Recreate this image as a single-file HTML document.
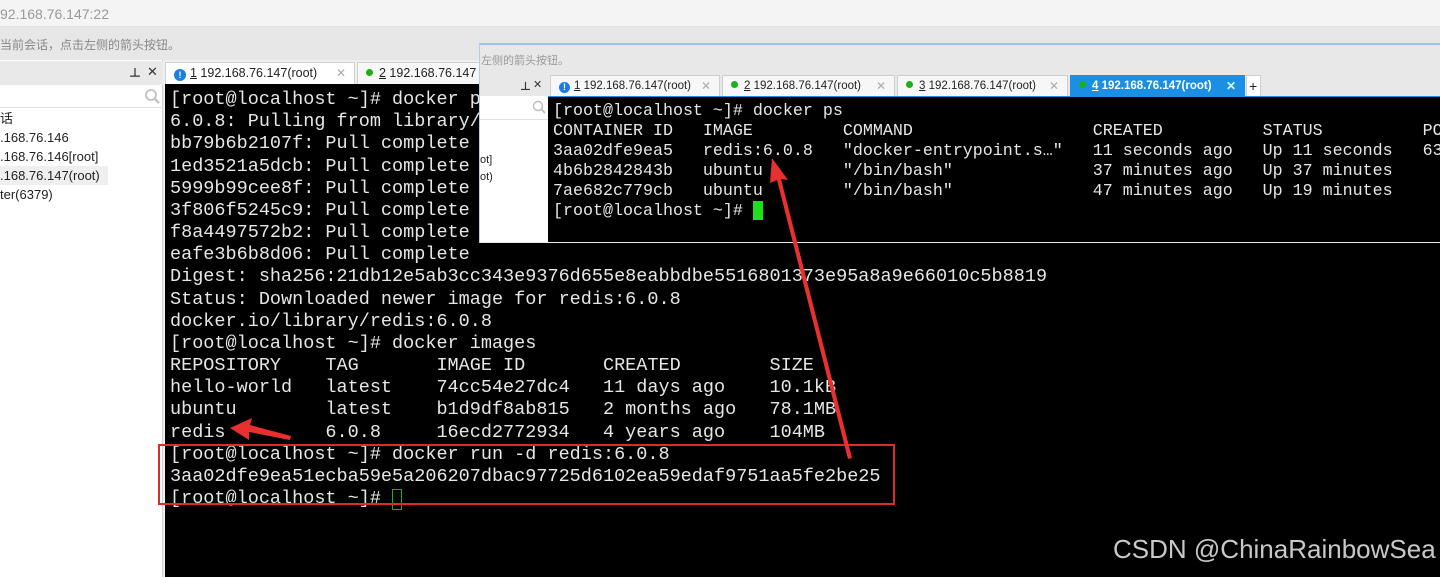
<!DOCTYPE html>
<html><head><meta charset="utf-8">
<style>
*{margin:0;padding:0;box-sizing:border-box}
body{width:1440px;height:577px;overflow:hidden;background:#f0f0f0;position:relative;font-family:"Liberation Sans","Noto Sans CJK SC",sans-serif}
.abs{position:absolute}
.mono{font-family:"Liberation Mono","DejaVu Sans Mono",monospace;white-space:pre;color:#e6e6e6}
.tab{position:absolute;height:22px;background:#f7f7f7;border:1px solid #cfcfcf;border-bottom:none;font-size:12.5px;color:#222;line-height:21px;padding-left:8px;white-space:nowrap;overflow:hidden}
.dot{display:inline-block;width:7px;height:7px;border-radius:50%;background:#1ab01a;margin-right:6px;vertical-align:1px}
.inf{display:inline-block;width:12px;height:12px;border-radius:50%;background:#1a7ee0;color:#fff;font-size:9px;line-height:12px;text-align:center;font-weight:bold;margin-right:4px;vertical-align:-1px}
.x{position:absolute;right:8px;top:0;color:#aaa;font-size:12px}
</style></head><body>
<div class="abs" style="left:0;top:0;width:1440px;height:27px;background:#f4f4f4;border-bottom:1px solid #e2e2e2"></div>
<div class="abs" style="left:0;top:6px;font-size:14px;color:#999">92.168.76.147:22</div>
<div class="abs" style="left:0;top:27px;width:1440px;height:33px;background:#e7e7e7"></div>
<div class="abs" style="left:0;top:36px;font-size:12px;color:#888">当前会话，点击左侧的箭头按钮。</div>

<div class="abs" style="left:0;top:60px;width:163px;height:517px;background:#fff;border-right:1px solid #ccc"></div>
<div class="abs" style="left:0;top:61px;width:163px;height:24px;background:#e9e9e9"></div>
<div class="abs" style="left:129px;top:64px;font-size:12px;font-weight:bold;color:#333">⊥</div>
<div class="abs" style="left:147px;top:64px;font-size:13px;color:#333">✕</div>
<div class="abs" style="left:0;top:107px;width:163px;height:1px;background:#e2e2e2"></div>
<svg class="abs" style="left:144px;top:88px" width="16" height="16"><circle cx="7" cy="7" r="5" fill="none" stroke="#bbb" stroke-width="1.6"/><line x1="11" y1="11" x2="15" y2="15" stroke="#bbb" stroke-width="2"/></svg>
<div class="abs" style="left:0;top:166px;width:108px;height:19px;background:#efefef"></div>
<div class="abs" style="left:0;top:109px;font-size:13px;line-height:19px;color:#222">话<br>.168.76.146<br>.168.76.146[root]<br>.168.76.147(root)<br>ter(6379)</div>

<div class="tab" style="left:165px;top:62px;width:190px;background:#fff"><span class="inf">!</span><u>1</u> 192.168.76.147(root)<span class="x">✕</span></div>
<div class="tab" style="left:357px;top:62px;width:130px"><span class="dot"></span><u>2</u> 192.168.76.147</div>
<div class="abs" style="left:165px;top:84px;width:1275px;height:493px;background:#000"></div>
<div class="abs mono" style="left:170px;top:89px;font-size:18.5px;line-height:22.17px">[root@localhost ~]# docker p
6.0.8: Pulling from library/
bb79b6b2107f: Pull complete
1ed3521a5dcb: Pull complete
5999b99cee8f: Pull complete
3f806f5245c9: Pull complete
f8a4497572b2: Pull complete
eafe3b6b8d06: Pull complete
Digest: sha256:21db12e5ab3cc343e9376d655e8eabbdbe5516801373e95a8a9e66010c5b8819
Status: Downloaded newer image for redis:6.0.8
docker.io/library/redis:6.0.8
[root@localhost ~]# docker images
REPOSITORY    TAG       IMAGE ID       CREATED        SIZE
hello-world   latest    74cc54e27dc4   11 days ago    10.1kB
ubuntu        latest    b1d9df8ab815   2 months ago   78.1MB
redis         6.0.8     16ecd2772934   4 years ago    104MB
[root@localhost ~]# docker run -d redis:6.0.8
3aa02dfe9ea51ecba59e5a206207dbac97725d6102ea59edaf9751aa5fe2be25
[root@localhost ~]# </div>
<div class="abs" style="left:392px;top:489px;width:10px;height:21px;border:1px solid #1db01d"></div>
<div class="abs" style="left:158px;top:444px;width:737px;height:61px;border:2px solid #e02a2a"></div>

<div class="abs" style="left:479px;top:43px;width:961px;height:200px;background:#e8e8e8;border-top:2px solid #9cc3ea;border-left:1px solid #bcd"></div>
<div class="abs" style="left:481px;top:52px;font-size:11px;color:#999">左侧的箭头按钮。</div>
<div class="abs" style="left:480px;top:75px;width:68px;height:167px;background:#fff"></div>
<div class="abs" style="left:480px;top:75px;width:68px;height:21px;background:#e8e8e8"></div>
<div class="abs" style="left:520px;top:78px;font-size:11px;font-weight:bold;color:#333">⊥</div>
<div class="abs" style="left:533px;top:78px;font-size:11px;color:#333">✕</div>
<svg class="abs" style="left:532px;top:100px" width="14" height="14"><circle cx="6" cy="6" r="4.5" fill="none" stroke="#bbb" stroke-width="1.4"/><line x1="9.5" y1="9.5" x2="13" y2="13" stroke="#bbb" stroke-width="1.8"/></svg>
<div class="abs" style="left:480px;top:119px;width:68px;height:1px;background:#e2e2e2"></div>
<div class="abs" style="left:480px;top:152px;font-size:11px;line-height:17px;color:#222">ot]<br>ot)</div>
<div class="tab" style="left:550px;top:75px;width:170px;height:21px;font-size:11.5px;line-height:20px"><span class="inf" style="width:11px;height:11px;line-height:11px">!</span><u>1</u> 192.168.76.147(root)<span class="x">✕</span></div>
<div class="tab" style="left:722px;top:75px;width:173px;height:21px;font-size:11.5px;line-height:20px"><span class="dot"></span><u>2</u> 192.168.76.147(root)<span class="x">✕</span></div>
<div class="tab" style="left:897px;top:75px;width:171px;height:21px;font-size:11.5px;line-height:20px"><span class="dot"></span><u>3</u> 192.168.76.147(root)<span class="x">✕</span></div>
<div class="tab" style="left:1070px;top:75px;width:175px;height:21px;font-size:11.5px;line-height:20px;background:#1a8fe3;border-color:#1a8fe3;color:#fff;font-weight:bold"><span class="dot"></span><u>4</u> 192.168.76.147(root)<span class="x" style="color:#cfe">✕</span></div>
<div class="tab" style="left:1246px;top:75px;width:15px;height:21px;padding-left:2px;font-size:14px;line-height:20px;background:#fff">+</div>
<div class="abs" style="left:548px;top:96px;width:892px;height:146px;background:#000;border-top:1px solid #1a8fe3"></div>
<div class="abs mono" style="left:553px;top:102px;font-size:16.67px;line-height:20px">[root@localhost ~]# docker ps
CONTAINER ID   IMAGE         COMMAND                  CREATED          STATUS          PORTS
3aa02dfe9ea5   redis:6.0.8   "docker-entrypoint.s…"   11 seconds ago   Up 11 seconds   6379/tcp
4b6b2842843b   ubuntu        "/bin/bash"              37 minutes ago   Up 37 minutes
7ae682c779cb   ubuntu        "/bin/bash"              47 minutes ago   Up 19 minutes
[root@localhost ~]# </div>
<div class="abs" style="left:753px;top:201px;width:10px;height:19px;background:#1ee01e"></div>

<svg class="abs" style="left:0;top:0" width="1440" height="577">
<polygon points="230,428 252,418 250,425 291,436 290,440 249,432 249,440" fill="#e8302e"/>
<polygon points="772,158 788,180 781,179 852,458 848,459 777,180 770,183" fill="#e8302e"/>
</svg>
<div class="abs" style="left:1113px;top:534px;font-size:26px;color:rgba(235,235,235,0.85)">CSDN @ChinaRainbowSea</div>
</body></html>
